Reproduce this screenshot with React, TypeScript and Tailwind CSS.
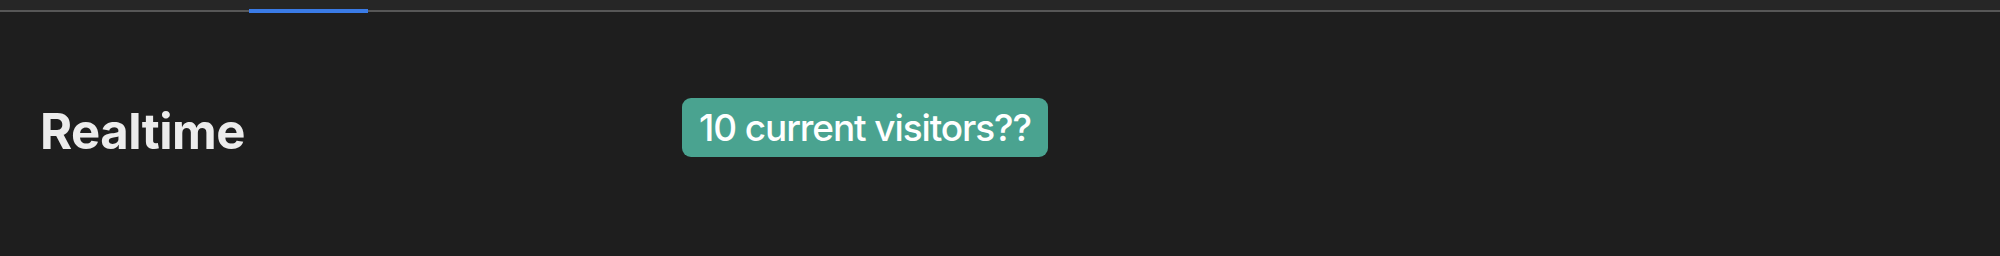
export default function App() {
  return (
    <div className="min-h-[256px] w-full bg-[#1e1e1e] font-['Inter',sans-serif]">
      {/* top strip with tab underline */}
      <div className="h-[10px] bg-[#262626]" />
      <div className="relative h-[2px] bg-[#575757]">
        <div className="absolute left-[249px] top-[-1px] h-[4px] w-[119px] bg-[#3a7be6]" />
      </div>

      <div className="flex items-center pl-[40px] pt-[86px]">
        <h1 className="mt-[7px] w-[642px] text-[49px] font-bold leading-none text-[#ececec] tracking-[-0.01em]">Realtime</h1>
        <span className="flex h-[59px] items-center rounded-[9px] bg-[#4aa390] px-[17px] text-[37px] font-medium leading-none text-white tracking-[-0.03em]">
          10 current visitors??
        </span>
      </div>
    </div>
  );
}
